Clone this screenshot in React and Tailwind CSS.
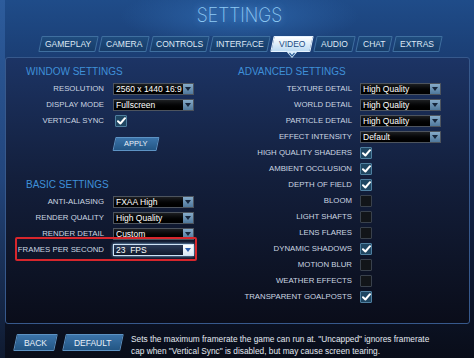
import React from "react";

const FONT = "[font-family:'Liberation_Sans',Arial,sans-serif]";

function Arrow({ active }) {
  return (
    <div
      className={
        "w-[10px] h-full flex items-center justify-center " +
        (active
          ? "bg-linear-to-b from-[#ffffff] to-[#dbe8f5]"
          : "bg-linear-to-b from-[#86abc9] to-[#4f789c]")
      }
    >
      <svg width="6" height="4" viewBox="0 0 6 4">
        <path d="M0 0 L6 0 L3 4 Z" fill={active ? "#2c5fae" : "#16263c"} />
      </svg>
    </div>
  );
}

function Dropdown({ value, active }) {
  return (
    <div
      className={
        "flex h-[12px] w-[81px] box-border " +
        (active
          ? "border border-[#cfe3f5] bg-linear-to-b from-[#2a3a58] to-[#121a2c] shadow-[0_0_3px_#8fc3ee]"
          : "border border-[#4d545e] bg-linear-to-b from-[#1d1f22] to-[#000000]")
      }
    >
      <div className="flex-1 pl-[2px] text-[8.5px] leading-[10px] text-white whitespace-pre overflow-hidden">
        {value}
      </div>
      <Arrow active={active} />
    </div>
  );
}

function Check({ on }) {
  return (
    <div
      className={
        "w-[12px] h-[12px] box-border flex items-center justify-center rounded-[1px] " +
        (on
          ? "border border-[#4f7f9f] bg-[#1f4662]"
          : "border border-[#39414c] bg-[#121519]")
      }
    >
      {on && (
        <svg width="9" height="8" viewBox="0 0 9 8">
          <path
            d="M1 4.2 L3.4 6.5 L8 1.2"
            stroke="#ffffff"
            strokeWidth="2"
            fill="none"
            strokeLinecap="round"
            strokeLinejoin="round"
          />
        </svg>
      )}
    </div>
  );
}

function Row({ label, labelW, gap, children }) {
  return (
    <div className="flex h-[12px] items-center">
      <div
        className="text-right text-[7.8px] leading-[12px] text-[#ccd6e2] whitespace-nowrap"
        style={{ width: labelW }}
      >
        {label}
      </div>
      <div style={{ marginLeft: gap }}>{children}</div>
    </div>
  );
}

function SlantButton({ label, w, h, text }) {
  return (
    <div
      className="-skew-x-12 box-border border border-[#5d93c4] bg-linear-to-b from-[#3b74aa] to-[#235684] flex items-center justify-center rounded-[1px]"
      style={{ width: w, height: h }}
    >
      <span className={"skew-x-12 text-[#e8f0f8] " + text}>{label}</span>
    </div>
  );
}

const tabs = [
  ["GAMEPLAY", 57],
  ["CAMERA", 48],
  ["CONTROLS", 57],
  ["INTERFACE", 58],
  ["VIDEO", 40],
  ["AUDIO", 39],
  ["CHAT", 34],
  ["EXTRAS", 47],
];

const advanced = [
  ["TEXTURE DETAIL", "d", "High Quality"],
  ["WORLD DETAIL", "d", "High Quality"],
  ["PARTICLE DETAIL", "d", "High Quality"],
  ["EFFECT INTENSITY", "d", "Default"],
  ["HIGH QUALITY SHADERS", "c", true],
  ["AMBIENT OCCLUSION", "c", true],
  ["DEPTH OF FIELD", "c", true],
  ["BLOOM", "c", false],
  ["LIGHT SHAFTS", "c", false],
  ["LENS FLARES", "c", false],
  ["DYNAMIC SHADOWS", "c", true],
  ["MOTION BLUR", "c", false],
  ["WEATHER EFFECTS", "c", false],
  ["TRANSPARENT GOALPOSTS", "c", true],
];

export default function App() {
  return (
    <div
      className={
        "w-[474px] h-[358px] overflow-hidden flex " +
        FONT +
        " bg-linear-to-b from-[#1f4c89] via-[#142a56] via-40% to-[#090d19]"
      }
    >
      {/* left outer strip */}
      <div className="w-[5px] h-full bg-linear-to-b from-[#2d5c9c] via-[#22457c] to-[#0f1a30]" />

      <div className="flex-1 flex flex-col">
        {/* title */}
        <div className="h-[36px] flex justify-center bg-[radial-gradient(ellipse_120px_30px_at_50%_45%,#2b62a6_0%,transparent_100%)]">
          <div className="pt-[2px] text-[20px] leading-[26px] tracking-[0px] scale-x-[0.88] text-[#8fcaf4] [font-family:Inter,sans-serif] font-extralight [text-shadow:0_0_8px_rgba(120,190,255,0.7)]">
            SETTINGS
          </div>
        </div>

        {/* tabs */}
        <div className="h-[16px] flex gap-[3px] pl-[35px]">
          {tabs.map(([t, w]) => {
            const active = t === "VIDEO";
            return (
              <div key={t} className="relative" style={{ width: w }}>
                <div
                  className={
                    "-skew-x-12 h-[16px] box-border flex items-center justify-center rounded-[1px] " +
                    (active
                      ? "border border-[#e6f3ff] bg-linear-to-b from-[#ffffff] to-[#bcdaf2]"
                      : "border border-[#3f6f9f] bg-linear-to-b from-[#1f4c7e] to-[#173c68]")
                  }
                >
                  <span
                    className={
                      "skew-x-12 text-[8.5px] leading-[10px] " +
                      (active ? "text-[#1d4c84]" : "text-[#dde8f4]")
                    }
                  >
                    {t}
                  </span>
                </div>
                {active && (
                  <svg
                    className="absolute left-1/2 -translate-x-1/2 top-[15px]"
                    width="12"
                    height="8"
                    viewBox="0 0 12 8"
                  >
                    <path d="M0 0 L12 0 L6 7 Z" fill="#d9ecfb" />
                    <path d="M3.5 2 L6 4.8 L8.5 2" stroke="#2a5c96" strokeWidth="1.2" fill="none" />
                  </svg>
                )}
              </div>
            );
          })}
        </div>

        {/* panel */}
        <div className="mt-[5px] w-[465px] h-[267px] box-border border border-[#37598c] rounded-[3px] bg-linear-to-b from-[#1c3465] via-[#131f3c] via-45% to-[#0a0d1a] flex">
          {/* left column */}
          <div className="relative w-[224px] pt-[8px] flex flex-col">
            <div className="pl-[20px] h-[12px] text-[10px] leading-[12px] text-[#3f90d8]">
              WINDOW SETTINGS
            </div>
            <div className="mt-[5px] flex flex-col gap-[4px]">
              <Row label="RESOLUTION" labelW={98} gap={9}>
                <Dropdown value="2560 x 1440 16:9" />
              </Row>
              <Row label="DISPLAY MODE" labelW={98} gap={9}>
                <Dropdown value="Fullscreen" />
              </Row>
              <Row label="VERTICAL SYNC" labelW={98} gap={11}>
                <Check on />
              </Row>
            </div>
            <div className="mt-[10px] pl-[108px]">
              <SlantButton label="APPLY" w={44} h={14} text="text-[7.5px] leading-[10px]" />
            </div>
            <div className="mt-[28px] pl-[20px] h-[12px] text-[10px] leading-[12px] text-[#3f90d8]">
              BASIC SETTINGS
            </div>
            <div className="mt-[5px] flex flex-col gap-[4px]">
              <Row label="ANTI-ALIASING" labelW={98} gap={9}>
                <Dropdown value="FXAA High" />
              </Row>
              <Row label="RENDER QUALITY" labelW={98} gap={9}>
                <Dropdown value="High Quality" />
              </Row>
              <Row label="RENDER DETAIL" labelW={98} gap={9}>
                <Dropdown value="Custom" />
              </Row>
              <Row label="FRAMES PER SECOND" labelW={98} gap={9}>
                <Dropdown value="23  FPS" active />
              </Row>
            </div>
            {/* red annotation box */}
            <div className="absolute left-[9px] top-[179px] w-[182px] h-[24px] border-2 border-[#d7262c] rounded-[2px]" />
          </div>

          {/* right column */}
          <div className="flex-1 pt-[8px] flex flex-col">
            <div className="pl-[8px] h-[12px] text-[10px] leading-[12px] text-[#3f90d8]">
              ADVANCED SETTINGS
            </div>
            <div className="mt-[5px] flex flex-col gap-[4px]">
              {advanced.map(([label, kind, v]) => (
                <Row key={label} label={label} labelW={122} gap={8}>
                  {kind === "d" ? <Dropdown value={v} /> : <Check on={v} />}
                </Row>
              ))}
            </div>
          </div>
        </div>

        {/* bottom bar */}
        <div className="flex pt-[10px] pl-[10px]">
          <SlantButton label="BACK" w={41} h={17} text="text-[8.5px] leading-[10px]" />
          <div className="ml-[8px]">
            <SlantButton label="DEFAULT" w={58} h={17} text="text-[8.5px] leading-[10px]" />
          </div>
          <div className="ml-[9px] -mt-[1px] text-[8.3px] leading-[12px] text-[#e3e9f1] whitespace-nowrap">
            <div>Sets the maximum framerate the game can run at. "Uncapped" ignores framerate</div>
            <div>cap when "Vertical Sync" is disabled, but may cause screen tearing.</div>
          </div>
        </div>
      </div>
    </div>
  );
}
